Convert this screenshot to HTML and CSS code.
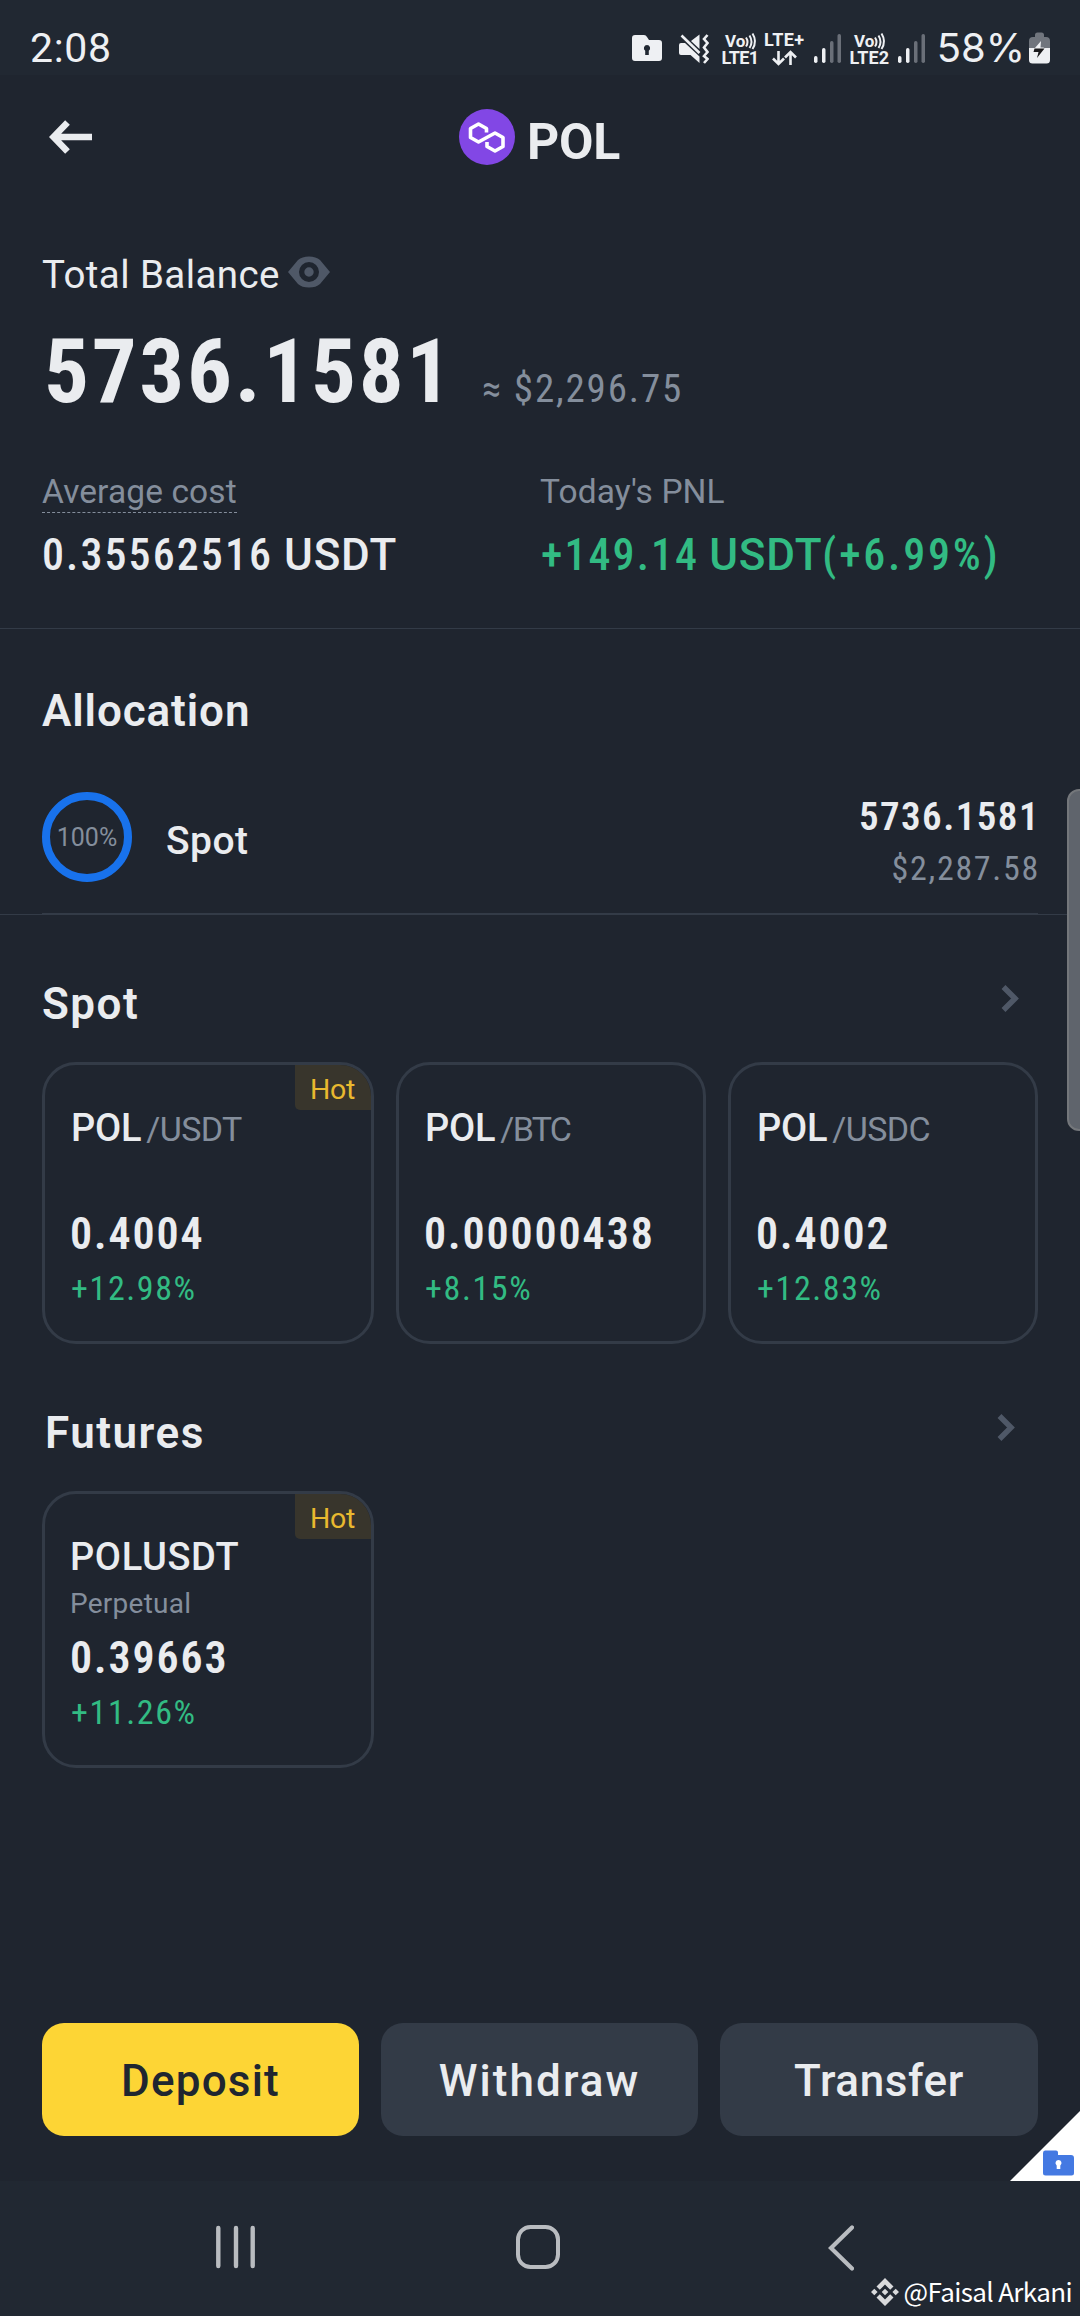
FILE: index.html
```html
<!DOCTYPE html>
<html lang="en">
<head>
<meta charset="utf-8">
<title>POL</title>
<link rel="stylesheet" href="styles.css">
</head>
<body>
<div class="screen">
  <header class="status">
    <span class="time">2:08</span>
    <div class="status-icons">
      <svg viewBox="632 28 30 40" width="30" height="40"><path fill="#eef0f3" fill-rule="evenodd" d="M635 35h9q2 0 3 2l2 3h10q3 0 3 3v15q0 3-3 3h-24q-3 0-3-3v-20q0-3 3-3zM647 45a3.200 3.200 0 0 0-1.800 5.800v4.200h3.600v-4.200a3.200 3.200 0 0 0-1.800-5.800z"/></svg>
      <svg class="si-mute" viewBox="679 28 30 40" width="30" height="40"><path fill="#eef0f3" d="M681 43h4l14.500 13.500v6.500l-9-8h-9.500q-2 0-2-2v-8q0-2 2-2zM691 41l8.500-6.500v14.500z"/><path d="M681.500 35.500l18 17.500" stroke="#eef0f3" stroke-width="2.600"/><path d="M707.500 35l-3.500 4 3.500 4-3.500 4.500 3.500 4.500-3.500 4 3.500 3-3.500 4" fill="none" stroke="#eef0f3" stroke-width="2.600"/></svg>
      <svg class="si-lte" viewBox="722 28 38 40" width="38" height="40"><text class="net" x="725" y="46.500">Vo</text><path class="arc" d="M746 37.500q3 4.500 0 9M749.500 35.500q4 6.500 0 12.500M752.500 33.500q5 8 0 15.500"/><text class="net lg" x="721.500" y="64" textLength="37.500">LTE1</text></svg>
      <svg class="si-data" viewBox="764 28 41 40" width="41" height="40"><text class="net lg" x="764" y="45.500" textLength="40">LTE+</text><path class="arrow" d="M778.500 51v13M773 58.500l5.500 5.500 5.500-5.500M790.500 65v-13M785 57.500l5.500-5.500 5.500 5.500"/></svg>
      <svg class="si-sig" viewBox="814 28 28 40" width="28" height="40"><g fill="#eef0f3"><rect x="814" y="56" width="3.500" height="7" rx="1.700"/><rect x="822" y="48" width="3.500" height="15" rx="1.700"/></g><g fill="#6a6f78"><rect x="830" y="41" width="3.500" height="22" rx="1.700"/><rect x="837.500" y="34" width="3.500" height="29" rx="1.700"/></g></svg>
      <svg class="si-lte2" viewBox="850 28 40 40" width="40" height="40"><text class="net" x="854" y="46.500">Vo</text><path class="arc" d="M875 37.500q3 4.500 0 9M878.500 35.500q4 6.500 0 12.500M881.500 33.500q5 8 0 15.500"/><text class="net lg" x="849.500" y="64" textLength="39.500">LTE2</text></svg>
      <svg class="si-sig2" viewBox="898 28 28 40" width="28" height="40"><g fill="#eef0f3"><rect x="898" y="56" width="3.500" height="7" rx="1.700"/><rect x="906" y="48" width="3.500" height="15" rx="1.700"/></g><g fill="#6a6f78"><rect x="914" y="41" width="3.500" height="22" rx="1.700"/><rect x="921.500" y="34" width="3.500" height="29" rx="1.700"/></g></svg>
      <span class="percent">58%</span>
      <svg class="si-bat" viewBox="1029 28 21 40" width="21" height="40"><path fill="#70757d" d="M1035 37v-2q0-2.500 2.500-2.500h4q2.500 0 2.500 2.500v2h2q4 0 4 4v7h-21v-7q0-4 4-4z"/><path fill="#eef0f3" d="M1029 48h21v12q0 3.500-3.500 3.500h-14q-3.500 0-3.500-3.500z"/><path fill="#eef0f3" d="M1041 41l-6.500 7.500h10l-1-1h-3z"/><path fill="#1b1b1d" d="M1034.500 48.500h10l-7.500 9.500 1.500-6h-5z"/></svg>
    </div>
  </header>

  <div class="topbar">
    <svg class="back" viewBox="0 0 44 34" width="44" height="34"><path d="M43 17H6M18.500 2.500L4.500 17l14 14.500" fill="none" stroke="#eaecef" stroke-width="6.500"/></svg>
    <svg class="coin" viewBox="0 0 56 56" width="56" height="56"><circle cx="28" cy="28" r="28" fill="#8247e5"/><path fill="none" stroke="#fff" stroke-width="3.600" stroke-linejoin="round" d="M27.500 23.500V19.500L19.500 15l-8 4.500v9l8 4.500L36 24l8 4.500v9L36 42l-8-4.500V33"/></svg>
    <h1 class="title">POL</h1>
  </div>

  <section class="balance">
    <div class="balance-label"><span>Total Balance</span>
      <svg class="eye" viewBox="0 0 42 32" width="42" height="32"><path fill="#4f5867" fill-rule="evenodd" d="M0 16L10 4Q14 .500 21 .500T32 4L42 16 32 28Q28 31.500 21 31.500T10 28zM21 6a10 10 0 1 0 0 20 10 10 0 1 0 0-20zm0 5.300a4.700 4.700 0 1 1 0 9.400 4.700 4.700 0 1 1 0-9.400z"/></svg>
    </div>
    <div class="amount"><strong class="total num">5736.1581</strong><span class="approx num">≈ $2,296.75</span></div>
    <div class="stats">
      <div class="stat"><span class="stat-label dashed">Average cost</span><div class="stat-value"><span class="num">0.35562516</span><span class="unit">USDT</span></div></div>
      <div class="stat"><span class="stat-label">Today's PNL</span><div class="stat-value up"><span class="num gain">+149.14</span><span class="unit gain-unit">USDT</span><span class="num rate">(+6.99%)</span></div></div>
    </div>
  </section>

  <section class="allocation">
    <h2 class="h-alloc">Allocation</h2>
    <div class="alloc-row">
      <div class="ring"><span>100%</span></div>
      <span class="alloc-name">Spot</span>
      <div class="alloc-values"><span class="alloc-amount num">5736.1581</span><span class="alloc-usd num">$2,287.58</span></div>
    </div>
  </section>

  <section class="market">
    <div class="market-head"><h2>Spot</h2><svg class="chev" viewBox="0 0 18 27" width="18" height="27"><path d="M2.500 2L14 13.500 2.500 25" fill="none" stroke="#4f5867" stroke-width="5.500"/></svg></div>
    <div class="cards">
      <article class="card"><em class="tag">Hot</em><div class="pair"><b>POL</b><span>/USDT</span></div><div class="price num">0.4004</div><div class="pct num">+12.98%</div></article>
      <article class="card"><div class="pair"><b>POL</b><span class="tight">/BTC</span></div><div class="price num">0.00000438</div><div class="pct num">+8.15%</div></article>
      <article class="card"><div class="pair"><b>POL</b><span>/USDC</span></div><div class="price num">0.4002</div><div class="pct num">+12.83%</div></article>
    </div>
  </section>

  <section class="market futures">
    <div class="market-head"><h2>Futures</h2><svg class="chev" viewBox="0 0 18 27" width="18" height="27"><path d="M2.500 2L14 13.500 2.500 25" fill="none" stroke="#4f5867" stroke-width="5.500"/></svg></div>
    <div class="cards">
      <article class="card"><em class="tag">Hot</em><div class="contract">POLUSDT</div><div class="kind">Perpetual</div><div class="price num">0.39663</div><div class="pct num">+11.26%</div></article>
    </div>
  </section>

  <div class="actions">
    <button class="btn primary">Deposit</button>
    <button class="btn withdraw">Withdraw</button>
    <button class="btn transfer">Transfer</button>
  </div>

  <nav class="navbar">
    <svg viewBox="0 0 40 44" width="40" height="44"><path d="M3.300 3v38M21 3v38M37.700 3v38" stroke="#b9bcc0" stroke-width="4.400" stroke-linecap="round"/></svg>
    <svg viewBox="0 0 44 44" width="44" height="44"><rect x="2" y="2" width="40" height="40" rx="12.500" fill="none" stroke="#b9bcc0" stroke-width="4"/></svg>
    <svg viewBox="0 0 26 46" width="26" height="46"><path d="M24 2.500L3 23l21 20.500" fill="none" stroke="#b9bcc0" stroke-width="4.200" stroke-linecap="round"/></svg>
  </nav>

  <div class="scroll-thumb"></div>
  <svg class="corner" viewBox="0 0 70 70" width="70" height="70"><path fill="#fff" d="M70 0v70H0z"/><path fill="#4479e2" d="M35 39.500h11q2 0 2 2v2.500h13q3 0 3 3v15q0 2.500-2.500 2.500H35.500q-2.500 0-2.500-2.500v-20q0-2.500 2-2.500z"/><path fill="#fff" d="M48.500 49a3 3 0 0 0-1.800 5.400V58h3.600v-3.600a3 3 0 0 0-1.800-5.400z"/></svg>
  <div class="credit">
    <svg viewBox="0 0 28 28" width="28" height="28"><path fill="#d9dadc" d="M14 0l8.500 8.500-3.300 3.300L14 6.600l-5.200 5.200-3.300-3.300zM14 28l8.500-8.500-3.300-3.300L14 21.400l-5.200-5.200-3.300 3.300zM14 10.700l3.300 3.300-3.300 3.300-3.300-3.300zM3.300 10.700L6.600 14l-3.300 3.300L0 14zM24.700 10.700L28 14l-3.300 3.300-3.300-3.300z"/></svg>
    <span>@Faisal Arkani</span>
  </div>
</div>
</body>
</html>
```
FILE: styles.css
```css
* { box-sizing: border-box; }
body { margin: 0; background: #1f252f; color: #eaecef; font-family: Roboto, "Noto Sans", sans-serif; }
h1, h2 { margin: 0; }
svg { display: block; flex: none; }
.screen { position: relative; width: 1080px; height: 2316px; overflow: hidden; display: flex; flex-direction: column; }
.num { font-stretch: 75%; }
.up { color: #32bb83; }

/* Phone status bar */
.status { height: 75px; padding: 20px 30px 0 30px; background: #212832; display: flex; justify-content: space-between; align-items: flex-start; color: #eef0f3; }
.time { font-size: 41px; line-height: 56px; letter-spacing: .66px; }
.status-icons { display: flex; align-items: center; height: 56px; }
.si-mute { margin-left: 17px; }
.si-lte { margin-left: 13px; }
.si-data { margin-left: 4px; }
.si-sig { margin-left: 9px; }
.si-lte2, .si-sig2 { margin-left: 8px; }
.percent { margin-left: 11px; font: 400 40px/56px Inter, sans-serif; }
.si-bat { margin-left: 4px; }
.net { font-size: 17px; font-weight: 700; fill: #eef0f3; }
.lg { font-size: 18px; }
.arc { fill: none; stroke: #eef0f3; stroke-width: 2; }
.arrow { fill: none; stroke: #eef0f3; stroke-width: 2.6; }

/* Page header */
.topbar { height: 130px; padding: 34px 0 0 49px; display: flex; align-items: flex-start; }
.back { margin-top: 11px; }
.coin { margin-left: 366px; }
.title { margin-left: 12px; font-size: 50px; font-weight: 700; line-height: 66px; letter-spacing: -.2px; }

/* Balance summary */
.balance { height: 424px; padding: 45px 42px 0; border-bottom: 1px solid #333b47; }
.balance-label { display: flex; font-size: 38.5px; line-height: 50px; letter-spacing: .4px; }
.eye { margin: 6px 0 0 8px; }
.amount { display: flex; align-items: baseline; height: 100px; margin-top: 22px; padding-left: 2px; line-height: 100px; }
.total { font-size: 89px; letter-spacing: 2.7px; }
.approx { margin-left: 28px; font-size: 39px; line-height: 50px; letter-spacing: 1.84px; color: #848e9c; }
.stats { display: grid; grid-template-columns: 498px 1fr; margin-top: 47px; }
.stat { display: flex; flex-direction: column; align-items: flex-start; }
.stat-label { height: 44px; font-size: 33.5px; line-height: 45px; letter-spacing: .1px; color: #848e9c; }
.dashed { border-bottom: 1px dashed #848e9c; }
.stat-value { display: flex; margin-top: 17px; font-size: 44px; font-weight: 500; line-height: 50px; letter-spacing: 2.08px; white-space: nowrap; }
.unit { margin-left: 11px; letter-spacing: .8px; }
.gain { margin-left: 1px; }
.gain-unit { margin-left: 10px; }
.rate { letter-spacing: 2.8px; }

/* Allocation */
h2 { font-size: 44px; font-weight: 600; line-height: 50px; letter-spacing: 1.5px; }
.h-alloc { letter-spacing: .9px; }
.allocation { height: 286px; padding: 57px 42px 0; border-bottom: 1px solid #333b47; }
.alloc-row { display: flex; align-items: flex-start; height: 179px; padding-top: 56px; margin-bottom: -1px; border-bottom: 2px solid #333b47; }
.ring { width: 90px; height: 90px; border: 8px solid #1872ec; border-radius: 50%; display: flex; align-items: center; justify-content: center; font-size: 25px; line-height: 32px; padding-top: 1px; color: #848e9c; }
.alloc-name { margin-left: 34px; font-size: 39px; font-weight: 500; line-height: 98px; letter-spacing: .45px; }
.alloc-values { margin: 0 -2px 0 auto; display: flex; flex-direction: column; align-items: flex-end; }
.alloc-amount { font-size: 39px; font-weight: 600; line-height: 50px; letter-spacing: 1.45px; }
.alloc-usd { font-size: 34px; line-height: 52px; letter-spacing: 1.7px; color: #848e9c; }

/* Market cards */
.market { padding: 63px 42px 0; height: 429px; }
.futures { height: 608px; }
.market-head { display: flex; justify-content: space-between; padding-right: 19px; height: 84px; }
.market-head h2 { line-height: 52px; }
.chev { margin-top: 7px; }
.cards { display: grid; grid-template-columns: 332px 310px 310px; gap: 22px; }
.card { position: relative; height: 282px; padding: 38px 0 0 26px; border: 3px solid #333b47; border-radius: 34px; overflow: hidden; }
.tag { position: absolute; top: 0; right: 0; width: 76px; height: 45px; padding-left: 15px; background: #38352c; border-bottom-left-radius: 5px; color: #e9b92f; font-size: 28.5px; font-style: normal; line-height: 49px; letter-spacing: -.3px; }
.pair { display: flex; align-items: baseline; line-height: 50px; }
.pair b { font-size: 38px; font-weight: 500; letter-spacing: -.22px; }
.pair span { margin-left: 5px; font-size: 34px; letter-spacing: -.6px; color: #848e9c; }
.pair .tight { letter-spacing: -1.7px; }
.price { margin: 55px 0 0 -1px; font-size: 44px; font-weight: 600; line-height: 50px; letter-spacing: 1.9px; }
.pct { margin-top: 5px; font-size: 34px; line-height: 48px; letter-spacing: 1.6px; color: #32bb83; }
.futures .market-head { padding: 0 23px 0 3px; }
.futures .card { height: 277px; }
.contract { margin-left: -1px; font-size: 38px; font-weight: 500; line-height: 50px; letter-spacing: .6px; }
.kind { margin-left: -1px; font-size: 28px; line-height: 44px; letter-spacing: .25px; color: #848e9c; }
.futures .price { margin-top: 7px; }

/* Action buttons */
.actions { display: grid; grid-template-columns: 317px 317px 318px; gap: 22px; padding: 0 42px; margin-top: auto; height: 158px; }
.btn { height: 113px; border: 0; border-radius: 22px; background: #333b47; color: #eaecef; font: 500 44px/117px Roboto, sans-serif; padding: 0; }
.primary { background: #fdd535; color: #202630; letter-spacing: 1.2px; }
.withdraw { letter-spacing: 2.09px; }
.transfer { letter-spacing: .6px; }

/* System navigation */
.navbar { height: 135px; padding: 44px 0 0 215px; background: #212832; display: flex; gap: 261px; align-items: flex-start; }
.navbar svg:last-child { margin-left: 7px; }

/* Overlays */
.scroll-thumb { position: absolute; left: 1067px; top: 789px; width: 24px; height: 342px; border: 2px solid #74777b; border-radius: 12px; background: #5f646c; }
.corner { position: absolute; left: 1010px; top: 2111px; }
.credit { position: absolute; right: 8px; top: 2274px; display: flex; align-items: center; gap: 4px; color: #fff; font: 26px/34px "Noto Sans CJK SC", sans-serif; letter-spacing: -.63px; }
.credit svg { margin-top: 2px; }
```
